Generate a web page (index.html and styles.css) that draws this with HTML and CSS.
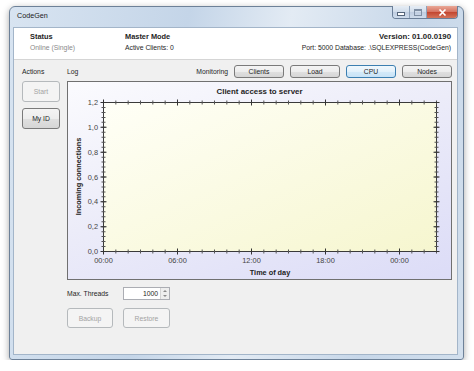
FILE: index.html
```html
<!DOCTYPE html>
<html lang="en">
<head>
    <meta charset="UTF-8">
    <meta name="viewport" content="width=device-width, initial-scale=1.0">
    <title>CodeGen</title>
    <link rel="stylesheet" href="styles.css">
</head>
<body>
    <div class="window">
        <div class="titlebar">
            <span class="title">CodeGen</span>
            <div class="caption-buttons">
                <span class="cap-btn cap-min"><i class="min-glyph"></i></span>
                <span class="cap-btn cap-max"><i class="max-glyph"></i></span>
                <span class="cap-btn cap-close">
                    <svg width="9" height="7" viewBox="0 0 9 7">
                        <path d="M1.5 0.5L7.5 6.5M7.5 0.5L1.5 6.5" stroke="#ffffff" stroke-width="1.6"/>
                    </svg>
                </span>
            </div>
        </div>

        <div class="client">
            <!-- Status header -->
            <div class="header">
                <div class="info info-status">
                    <div class="info-title">Status</div>
                    <div class="info-sub muted">Online (Single)</div>
                </div>
                <div class="info info-mode">
                    <div class="info-title">Master Mode</div>
                    <div class="info-sub">Active Clients: 0</div>
                </div>
                <div class="info info-version">
                    <div class="info-title version">Version: 01.00.0190</div>
                    <div class="info-sub">Port: 5000 Database: .\SQLEXPRESS(CodeGen)</div>
                </div>
            </div>

            <div class="main">
                <div class="actions">
                    <div class="label">Actions</div>
                    <button class="btn action-btn" disabled>Start</button>
                    <button class="btn action-btn">My ID</button>
                </div>

                <div class="log">
                    <div class="log-bar">
                        <span class="label">Log</span>
                        <span class="label monitoring">Monitoring</span>
                        <button class="btn tab-btn">Clients</button>
                        <button class="btn tab-btn">Load</button>
                        <button class="btn tab-btn active">CPU</button>
                        <button class="btn tab-btn">Nodes</button>
                    </div>

                    <!-- Chart -->
                    <div class="chart">
                        <svg class="chart-svg" width="383" height="197" viewBox="0 0 383 197">
                            <defs>
                                <linearGradient id="plotFill" x1="0" y1="0" x2="1" y2="1">
                                    <stop offset="0" stop-color="#fffff7"/>
                                    <stop offset="1" stop-color="#f6f6cf"/>
                                </linearGradient>
                            </defs>
                            <text class="chart-title" x="191.5" y="12" text-anchor="middle">Client access to server</text>
                            <rect x="35.5" y="20.5" width="333" height="149" fill="url(#plotFill)" stroke="#3a3a3a"/>
                            <g class="minor-ticks" stroke="#555555">
                                <line x1="35" y1="169.5" x2="370" y2="169.5" stroke-width="4" stroke-dasharray="1 11.333"/>
                                <line x1="35" y1="20.5" x2="370" y2="20.5" stroke-width="4" stroke-dasharray="1 11.333"/>
                                <line x1="35.5" y1="20" x2="35.5" y2="171" stroke-width="4" stroke-dasharray="1 3.967"/>
                                <line x1="368.5" y1="20" x2="368.5" y2="171" stroke-width="4" stroke-dasharray="1 3.967"/>
                            </g>
                            <g class="major-ticks" stroke="#333333">
                                <line x1="35" y1="169.5" x2="370" y2="169.5" stroke-width="6" stroke-dasharray="1 73"/>
                                <line x1="35" y1="20.5" x2="370" y2="20.5" stroke-width="6" stroke-dasharray="1 73"/>
                                <line x1="35.5" y1="20" x2="35.5" y2="171" stroke-width="6" stroke-dasharray="1 23.833"/>
                                <line x1="368.5" y1="20" x2="368.5" y2="171" stroke-width="6" stroke-dasharray="1 23.833"/>
                            </g>
                            <g class="axis-label" text-anchor="end">
                                <text x="30" y="23">1,2</text>
                                <text x="30" y="47.8">1,0</text>
                                <text x="30" y="72.7">0,8</text>
                                <text x="30" y="97.5">0,6</text>
                                <text x="30" y="122.3">0,4</text>
                                <text x="30" y="147.2">0,2</text>
                                <text x="30" y="172">0,0</text>
                            </g>
                            <g class="axis-label" text-anchor="middle">
                                <text x="35.5" y="181">00:00</text>
                                <text x="109.5" y="181">06:00</text>
                                <text x="183.5" y="181">12:00</text>
                                <text x="257.5" y="181">18:00</text>
                                <text x="331.5" y="181">00:00</text>
                            </g>
                            <text class="axis-title" x="202" y="193" text-anchor="middle">Time of day</text>
                            <text class="axis-title" transform="translate(12.7 94.5) rotate(-90)" text-anchor="middle">Incoming connections</text>
                        </svg>
                    </div>

                    <div class="threads-row">
                        <span class="label threads-label">Max. Threads</span>
                        <div class="spin">
                            <span class="spin-value">1000</span>
                            <div class="spin-arrows">
                                <span class="arrow-up"></span>
                                <span class="arrow-down"></span>
                            </div>
                        </div>
                    </div>

                    <div class="db-row">
                        <button class="btn db-btn backup" disabled>Backup</button>
                        <button class="btn db-btn restore" disabled>Restore</button>
                    </div>
                </div>
            </div>
        </div>
    </div>
</body>
</html>
```

FILE: styles.css
```css
body {
    margin: 0;
    background: #ffffff;
    font-family: "Liberation Sans", Arial, sans-serif;
    font-size: 6.8px;
    color: #1e1e1e;
}

/* Window frame (Aero style) */
.window {
    margin: 6px 0 0 9px;
    width: 455px;
    height: 354px;
    box-sizing: border-box;
    border: 1px solid #6d8198;
    border-radius: 6px 6px 3px 3px;
    background: linear-gradient(100deg, #d8e4f1 0%, #c4d5e8 35%, #e3ebf4 55%, #c7d7e9 80%, #d2dfed 100%);
    padding: 0 5px 4px 3px;
    display: flex;
    flex-direction: column;
    box-shadow: 0 2px 7px rgba(0, 0, 0, 0.35);
}

.titlebar {
    height: 20px;
    display: flex;
    justify-content: space-between;
    align-items: flex-start;
    padding-left: 4px;
}

.title {
    font-size: 7.2px;
    line-height: 18px;
    color: #1a1a1a;
}

.caption-buttons {
    display: flex;
    margin-top: -1px;
    border: 1px solid #6b7f98;
    border-top: none;
    border-radius: 0 0 4px 4px;
    overflow: hidden;
}

.cap-btn {
    height: 12px;
    display: flex;
    align-items: center;
    justify-content: center;
}

.cap-min, .cap-max {
    width: 16px;
    background: linear-gradient(#e6edf5, #d0dcea 50%, #bfcde0 51%, #cfdcec);
    border-right: 1px solid #8fa3bb;
}

.min-glyph {
    width: 6px;
    height: 2px;
    margin-top: 4px;
    background: #ffffff;
    border: 1px solid #55657a;
}

.max-glyph {
    width: 6px;
    height: 4px;
    border: 1px solid #8090a5;
    border-top-width: 2px;
    background: transparent;
}

.cap-close {
    width: 30px;
    background: linear-gradient(#e9a897, #d5705e 50%, #c2452f 51%, #d4735a);
}

/* Client area */
.client {
    flex: 1;
    border: 1px solid #a3b5c9;
    background: #f0f0f0;
    display: flex;
    flex-direction: column;
}

.header {
    height: 28px;
    background: #ffffff;
    border-bottom: 1px solid #d5d5d5;
    padding: 3px 6px 0 16px;
    display: flex;
}

.info-title {
    font-weight: bold;
    font-size: 7.4px;
    line-height: 11px;
}

.info-sub {
    line-height: 11px;
}

.muted {
    color: #8a8a8a;
}

.info-status {
    width: 95px;
}

.info-version {
    margin-left: auto;
    text-align: right;
}

.version {
    font-size: 7.8px;
}

.main {
    display: flex;
    gap: 7px;
    padding: 5px 5px 0 8px;
}

.label {
    line-height: 13px;
    height: 13px;
}

.actions {
    width: 38px;
    display: flex;
    flex-direction: column;
}

.btn {
    font-family: inherit;
    font-size: 6.8px;
    color: #1e1e1e;
    border: 1px solid #7a7a7a;
    border-radius: 3px;
    background: linear-gradient(#f4f4f4, #ededed 50%, #e0e0e0 51%, #d6d6d6);
    padding: 0;
    box-sizing: border-box;
}

.btn:disabled {
    border-color: #b5b9bc;
    background: #f4f4f4;
    color: #a3a3a3;
}

.btn.active {
    border-color: #3c7fb1;
    background: linear-gradient(#f0f8fd, #e3f1fb 50%, #d4eaf9 51%, #c9e3f6);
}

.action-btn {
    height: 21px;
    margin-top: 3px;
}

.action-btn + .action-btn {
    margin-top: 6px;
}

.log {
    flex: 1;
    display: flex;
    flex-direction: column;
}

.log-bar {
    display: flex;
    align-items: center;
    gap: 6px;
    height: 13px;
}

.monitoring {
    margin-left: auto;
}

.tab-btn {
    width: 50px;
    height: 13px;
}

.chart {
    margin-top: 3px;
    height: 199px;
    box-sizing: border-box;
    border: 1px solid #707070;
    background: linear-gradient(160deg, #fbfbfe 0%, #ececf9 45%, #dcdcf7 100%);
}

.chart-svg {
    display: block;
}

.chart-title {
    font-family: "Liberation Sans", Arial, sans-serif;
    font-weight: bold;
    font-size: 7.9px;
    fill: #1e1e1e;
}

.axis-label {
    font-family: "Liberation Sans", Arial, sans-serif;
    font-size: 7.4px;
    fill: #444444;
}

.axis-title {
    font-family: "Liberation Sans", Arial, sans-serif;
    font-weight: bold;
    font-size: 7.3px;
    fill: #222222;
}

.threads-row {
    margin-top: 7px;
    display: flex;
    align-items: center;
    height: 13px;
}

.threads-label {
    width: 56px;
}

.spin {
    width: 47px;
    height: 13px;
    box-sizing: border-box;
    border: 1px solid #abadb3;
    background: #ffffff;
    display: flex;
}

.spin-value {
    flex: 1;
    text-align: right;
    line-height: 11px;
    padding-right: 2px;
}

.spin-arrows {
    width: 8px;
    display: flex;
    flex-direction: column;
    background: #eeeeee;
    border-left: 1px solid #d4d4d4;
}

.arrow-up, .arrow-down {
    flex: 1;
    position: relative;
}

.arrow-up::after, .arrow-down::after {
    content: "";
    position: absolute;
    left: 2px;
    border-left: 2px solid transparent;
    border-right: 2px solid transparent;
}

.arrow-up::after {
    top: 2px;
    border-bottom: 2px solid #8a8a8a;
}

.arrow-down::after {
    top: 1px;
    border-top: 2px solid #8a8a8a;
}

.db-row {
    margin-top: 8px;
    display: flex;
    gap: 10px;
}

.db-btn {
    height: 20px;
}

.backup {
    width: 46px;
}

.restore {
    width: 47px;
}
```
